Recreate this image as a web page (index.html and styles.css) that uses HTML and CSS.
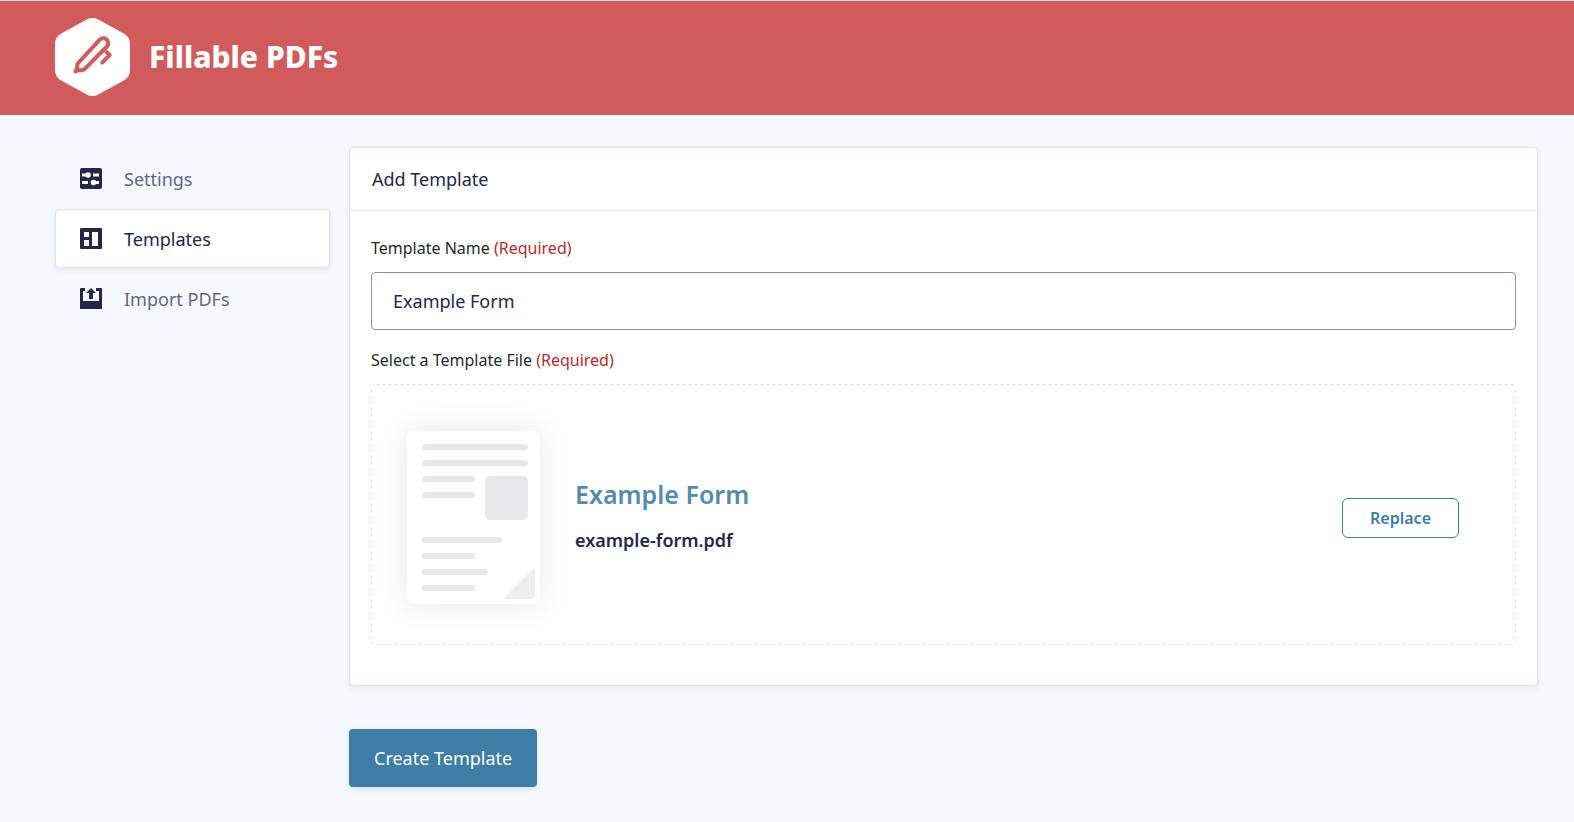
FILE: index.html
```html
<!DOCTYPE html>
<html lang="en">
<head>
<meta charset="utf-8">
<meta name="viewport" content="width=device-width, initial-scale=1">
<title>Fillable PDFs</title>
<link rel="stylesheet" href="styles.css">
</head>
<body>
<header class="masthead">
  <svg class="logo" viewBox="0 0 75 78" aria-hidden="true">
    <path d="M12 26 37.500 12 63 26V52L37.500 66 12 52Z" fill="#fff" stroke="#fff" stroke-width="24" stroke-linejoin="round"/>
    <g fill="none" stroke="#d15b5c" stroke-width="4" stroke-linecap="round" stroke-linejoin="round">
      <path d="M44.800 21.600a4.900 4.900 0 0 1 7 7L29.500 51.200q-1 1-2.500 1L24 52 20.500 53.400 22.200 50V47.500q0-1.500 1-2.500Z"/>
      <path d="M51.500 34 54.700 37 47.300 44.500"/>
    </g>
  </svg>
  <h1 class="brand">Fillable PDFs</h1>
</header>
<div class="layout">
  <nav class="sidebar">
    <a class="nav-link" href="#">
      <svg class="nav-icon" viewBox="0 0 22 21" aria-hidden="true"><rect width="22" height="21" rx="2" fill="#242748"/><g fill="#fff"><path d="M2 5.500h4v3H2zM13 5.500h6v3h-6zM2 13h6v3H2zM15 13h4v3h-4z"/><circle cx="8" cy="7" r="2.800"/><circle cx="13.500" cy="14.500" r="2.800"/></g></svg>
      Settings
    </a>
    <a class="nav-link nav-link-active" href="#" aria-current="page">
      <svg class="nav-icon" viewBox="0 0 22 21" aria-hidden="true"><rect width="22" height="21" rx="1" fill="#242748"/><path d="M4 4h5v5H4zM4 12h5v6H4zM12 4h6v14h-6z" fill="#fff"/></svg>
      Templates
    </a>
    <a class="nav-link" href="#">
      <svg class="nav-icon" viewBox="0 0 22 21" aria-hidden="true"><path d="M1 0h4v3H3v10h16V3h-3V0h5q1 0 1 1v20H0V1q0-1 1-1ZM11 0l5 5h-3v6H9V5H6Z" fill="#242748"/></svg>
      Import PDFs
    </a>
  </nav>
  <main class="content">
    <form class="template-form">
      <section class="card">
        <h2 class="card-title">Add Template</h2>
        <div class="card-body">
          <label class="label" for="name">Template Name <span class="required">(Required)</span></label>
          <input class="text-input" id="name" type="text" value="Example Form">
          <p class="label" id="file-label">Select a Template File <span class="required">(Required)</span></p>
          <div class="dropzone" role="group" aria-labelledby="file-label">
            <svg class="document" viewBox="0 0 133 173" aria-hidden="true">
              <rect width="133" height="173" rx="6" fill="#fff"/>
              <g fill="#e7e8ea"><rect x="15" y="13" width="106" height="6" rx="3"/><rect x="15" y="29" width="106" height="6" rx="3"/><rect x="15" y="45" width="53" height="6" rx="3"/><rect x="15" y="61" width="53" height="6" rx="3"/><rect x="78" y="45" width="43" height="44" rx="5"/><rect x="15" y="106" width="80" height="6" rx="3"/><rect x="15" y="122" width="53" height="6" rx="3"/><rect x="15" y="138" width="66" height="6" rx="3"/><rect x="15" y="154" width="53" height="6" rx="3"/></g>
              <path d="M128 136v28q0 4-4 4H96Z" fill="#eeeef1"/>
            </svg>
            <div class="file-info">
              <h3 class="file-title">Example Form</h3>
              <p class="file-name">example-form.pdf</p>
            </div>
            <button class="replace" type="button">Replace</button>
          </div>
        </div>
      </section>
      <button class="submit" type="submit">Create Template</button>
    </form>
  </main>
</div>
</body>
</html>
```
FILE: styles.css
```css
* { box-sizing: border-box; }
body {
  margin: 0;
  background: #f5f9fc;
  color: #242748;
  font-family: "Noto Sans", sans-serif;
  font-size: 18px;
}
h1, h2, h3, p { margin: 0; }
button, input { font: inherit; }
.masthead {
  display: flex;
  align-items: center;
  gap: 19px;
  padding: 17px 55px 19px;
  border-top: 1px solid #dedfe0;
  background: #d15b5c;
  color: #fff;
}
.logo { width: 75px; height: 78px; }
.brand { font-size: 30px; line-height: 40px; font-weight: 800; }
.layout { display: flex; gap: 19px; padding: 32px 36px 34px 55px; }
.sidebar {
  display: flex;
  flex: none;
  flex-direction: column;
  gap: 1px;
  width: 275px;
  padding-top: 2px;
}
.nav-link {
  display: flex;
  align-items: center;
  gap: 22px;
  height: 59px;
  padding: 0 24px;
  border: 1px solid transparent;
  border-radius: 4px;
  color: #646488;
  text-decoration: none;
}
.nav-link-active {
  border-color: #e1e2ee;
  background: #fff;
  color: #242748;
  box-shadow: 0 2px 5px #32325d14;
}
.nav-icon { width: 22px; height: 21px; }
.content { flex: 1; min-width: 0; }
.card {
  margin-bottom: 43px;
  border: 1px solid #e1e3ed;
  border-radius: 4px;
  background: #fff;
  box-shadow: 0 2px 6px #32325d14;
}
.card-title {
  padding: 19px 22px 18px;
  border-bottom: 1px solid #e4e5ed;
  font-size: 18px;
  line-height: 25px;
  font-weight: 400;
}
.card-body { padding: 25px 21px 40px; }
.label { display: block; color: #23282d; font-size: 16px; line-height: 24px; }
.required { color: #b32d2e; }
.text-input {
  display: block;
  width: 100%;
  height: 58px;
  margin: 12px 0 18px;
  padding: 0 21px;
  border: 1px solid #8c8cb0;
  border-radius: 4px;
  background: #fff;
  color: #242748;
}
.dropzone {
  --dash: #d0d0e2 0 2px, transparent 2px 6px;
  display: flex;
  align-items: center;
  gap: 35px;
  margin-top: 12px;
  padding: 47px 57px 41px 36px;
  border-radius: 4px;
  background:
    repeating-linear-gradient(90deg, var(--dash)) top / 100% 1px no-repeat,
    repeating-linear-gradient(90deg, var(--dash)) bottom / 100% 1px no-repeat,
    repeating-linear-gradient(180deg, var(--dash)) left / 1px 100% no-repeat,
    repeating-linear-gradient(180deg, var(--dash)) right / 1px 100% no-repeat;
}
.document { flex: none; width: 133px; height: 173px; border-radius: 6px; box-shadow: 0 0 30px #32325d1f; }
.file-info { flex: 1; padding-bottom: 7px; }
.file-title { color: #528bb0; font-size: 25px; line-height: 36px; font-weight: 600; }
.file-name { margin-top: 16px; line-height: 24px; font-weight: 600; }
.replace {
  height: 40px;
  padding: 0 27px;
  border: 1px solid #3e7da6;
  border-radius: 6px;
  background: #fff;
  color: #3e7da6;
  font-size: 16px;
  font-weight: 600;
}
.submit {
  height: 58px;
  padding: 0 25px;
  border: 0;
  border-radius: 4px;
  background: #3e7da6;
  color: #fff;
  box-shadow: 0 2px 5px #32325d1f;
}
```
